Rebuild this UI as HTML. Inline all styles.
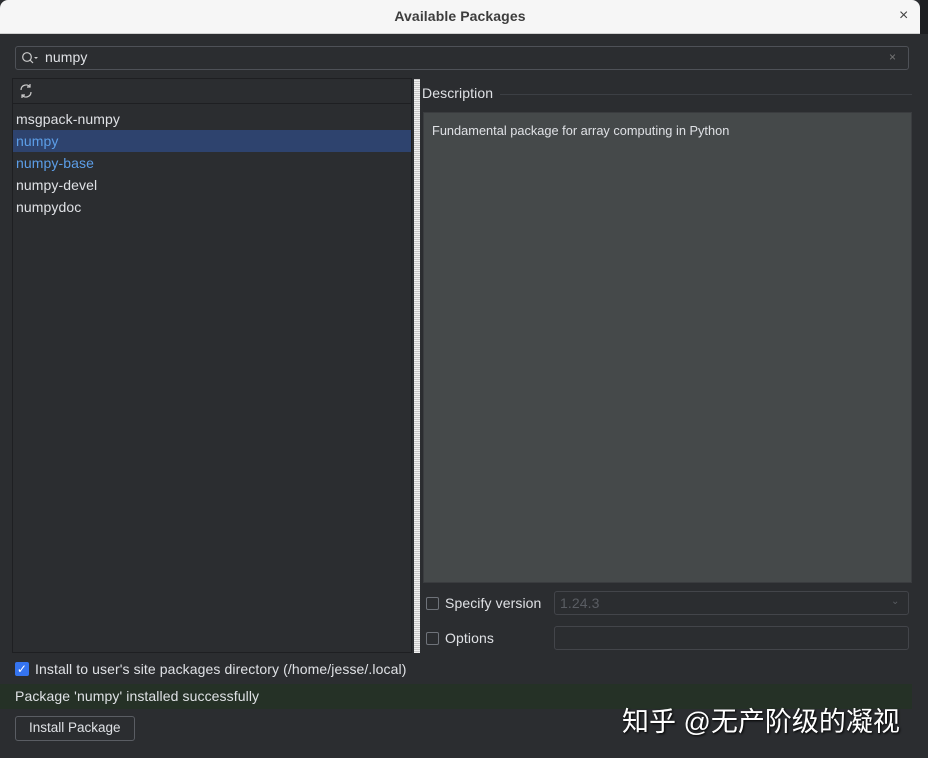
<!DOCTYPE html>
<html><head><meta charset="utf-8"><style>
*{margin:0;padding:0;box-sizing:border-box}
body{width:928px;height:758px;background:#2b2d30;font-family:"Liberation Sans","DejaVu Sans",sans-serif;font-size:14px;letter-spacing:0.1px;color:#dfe1e5;position:relative;overflow:hidden}
.a{position:absolute}
.title{left:0;top:0;width:920px;height:34px;background:#f6f6f6;border-bottom:1px solid #d0d0d0;border-top-left-radius:8px;border-top-right-radius:8px;text-align:center;line-height:33px;font-weight:bold;font-size:14px;color:#3d3d3d}
.cb{width:13px;height:13px;border:1px solid #6f737a;border-radius:2px}
.field{border:1px solid #43454a;border-radius:3px}
</style></head><body>
<div class="a" style="left:920px;top:0;width:8px;height:34px;background:#1e1f22"></div>
<div class="a title">Available Packages</div>
<div class="a" style="left:899px;top:7px;font-size:16px;color:#444">×</div>
<div class="a field" style="left:15px;top:46px;width:894px;height:24px;border-color:#4e5157"></div>
<svg class="a" style="left:21px;top:51px" width="18" height="14"><circle cx="6" cy="6" r="4.3" fill="none" stroke="#ccc" stroke-width="1.2"/><path d="M9 9l3 3" stroke="#ccc" stroke-width="1.2"/><path d="M13 6h4l-2 2z" fill="#ccc"/></svg>
<div class="a" style="left:45px;top:49px">numpy</div>
<div class="a" style="left:889px;top:50px;color:#777;font-size:12px">×</div>
<div class="a" style="left:12px;top:78px;width:400px;height:575px;border:1px solid #1e1f22;background:#2b2d30"></div>
<div class="a" style="left:13px;top:103px;width:398px;height:1px;background:#1e1f22"></div>
<svg class="a" style="left:18px;top:83px" width="16" height="16"><path d="M3 7a5 5 0 0 1 9-3M13 9a5 5 0 0 1-9 3" fill="none" stroke="#ccc" stroke-width="1.2"/><path d="M12 1v3h-3M4 15v-3h3" fill="none" stroke="#ccc" stroke-width="1.2"/></svg>
<div class="a" style="left:16px;top:111px">msgpack-numpy</div>
<div class="a" style="left:13px;top:130px;width:398px;height:22px;background:#2e436e"></div>
<div class="a" style="left:16px;top:133px;color:#5c9ee8">numpy</div>
<div class="a" style="left:16px;top:155px;color:#5c9ee8">numpy-base</div>
<div class="a" style="left:16px;top:177px">numpy-devel</div>
<div class="a" style="left:16px;top:199px">numpydoc</div>
<div class="a" style="left:414px;top:79px;width:6px;height:574px;background:repeating-linear-gradient(0deg,#f0f0f0 0 1px,#c8c8c8 1px 2px)"></div>
<div class="a" style="left:422px;top:85px">Description</div>
<div class="a" style="left:500px;top:94px;width:412px;height:1px;background:#3c3f44"></div>
<div class="a" style="left:423px;top:112px;width:489px;height:471px;background:#45494a;border:1px solid #3a3c3f"></div>
<div class="a" style="left:432px;top:123px;font-size:12.8px;letter-spacing:0">Fundamental package for array computing in Python</div>
<div class="a cb" style="left:426px;top:597px"></div>
<div class="a" style="left:445px;top:595px">Specify version</div>
<div class="a field" style="left:554px;top:591px;width:355px;height:24px"></div>
<div class="a" style="left:560px;top:595px;color:#5a5d63">1.24.3</div>
<div class="a" style="left:891px;top:596px;color:#5a5d63;font-size:10px">⌄</div>
<div class="a cb" style="left:426px;top:632px"></div>
<div class="a" style="left:445px;top:630px">Options</div>
<div class="a field" style="left:554px;top:626px;width:355px;height:24px"></div>
<div class="a" style="left:15px;top:662px;width:14px;height:14px;background:#3574f0;border-radius:2px;color:#fff;font-size:12px;line-height:14px;text-align:center;font-weight:bold">✓</div>
<div class="a" style="left:35px;top:661px">Install to user's site packages directory (/home/jesse/.local)</div>
<div class="a" style="left:0;top:684px;width:912px;height:25px;background:#253126"></div>
<div class="a" style="left:15px;top:688px">Package 'numpy' installed successfully</div>
<div class="a field" style="left:15px;top:716px;width:120px;height:25px;border-color:#5a5d63"></div>
<div class="a" style="left:29px;top:720px;font-size:13.5px;letter-spacing:0">Install Package</div>
<div class="a" style="left:622px;top:700px;font-size:27px;letter-spacing:0;color:#fff;font-family:'Liberation Sans','Noto Sans CJK SC',sans-serif;text-shadow:1px 1px 2px #000">知乎 @无产阶级的凝视</div>
</body></html>
